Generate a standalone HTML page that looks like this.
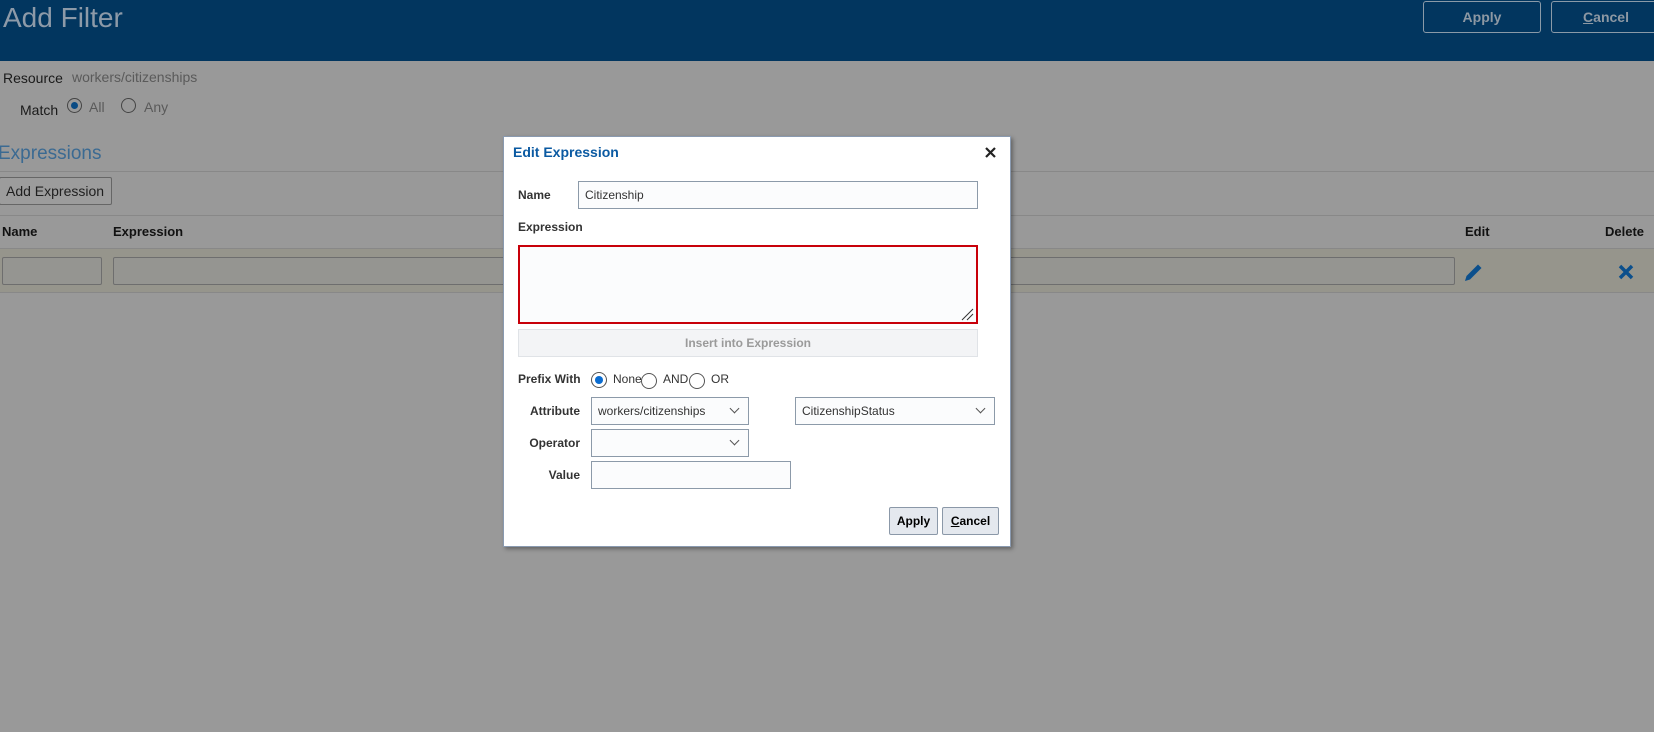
<!DOCTYPE html>
<html><head><style>
*{box-sizing:border-box;margin:0;padding:0}
body{width:1654px;height:732px;background:#999;font-family:"Liberation Sans",sans-serif;position:relative;overflow:hidden}
.a{position:absolute;white-space:nowrap}
.hdr{left:0;top:0;width:1654px;height:61px;background:#02365f}
.t{color:#5a5a5a;font-size:14px}
.inp{border:1px solid #6e6e6e;border-radius:2px;background:#959591}
.d{left:503px;top:136px;width:508px;height:411px;background:#fff;border:1px solid #8a9ab0;box-shadow:2px 2px 4px rgba(0,0,0,.35)}
.l{font-size:12px;color:#333;font-weight:bold}
.fi{border:1px solid #8c9aa9;background:#fbfcfd;font-size:12px;color:#333;padding-left:6px;display:flex;align-items:center}
.rad{width:16px;height:16px;border:1px solid #555;border-radius:50%;background:#fff}
.chev{position:absolute;right:10px;top:7px;width:7px;height:7px;border-right:1px solid #555;border-bottom:1px solid #555;transform:rotate(45deg)}
.btn{border:1px solid #8b98a8;background:#e4e8ee;font-size:12px;font-weight:bold;color:#000;display:flex;align-items:center;justify-content:center;border-radius:2px}
</style></head><body>
<div class="a hdr"></div>
<div class="a" style="left:3px;top:2px;font-size:28px;color:#8d9aa8">Add Filter</div>
<div class="a" style="left:1423px;top:1px;width:118px;height:32px;border:1px solid #8a9aa8;border-radius:3px;color:#8d98a3;font-weight:bold;font-size:14px;display:flex;align-items:center;justify-content:center">Apply</div>
<div class="a" style="left:1551px;top:1px;width:110px;height:32px;border:1px solid #8a9aa8;border-radius:3px;color:#8d98a3;font-weight:bold;font-size:14px;display:flex;align-items:center;justify-content:center"><u>C</u>ancel</div>
<div class="a" style="left:3px;top:70px;font-size:14px;color:#1a1a1a">Resource</div>
<div class="a t" style="left:72px;top:69px">workers/citizenships</div>
<div class="a" style="left:20px;top:102px;font-size:14px;color:#1a1a1a">Match</div>
<div class="a" style="left:67px;top:98px;width:15px;height:15px;border:1px solid #444;border-radius:50%;background:#9a9a9a"><div style="margin:3px;width:7px;height:7px;border-radius:50%;background:#0a4b84"></div></div>
<div class="a t" style="left:89px;top:99px">All</div>
<div class="a" style="left:121px;top:98px;width:15px;height:15px;border:1px solid #444;border-radius:50%"></div>
<div class="a t" style="left:144px;top:99px">Any</div>
<div class="a" style="left:-2px;top:143px;font-size:19px;color:#3b6a92">Expressions</div>
<div class="a" style="left:0;top:171px;width:1654px;height:1px;background:#888"></div>
<div class="a" style="left:-1px;top:177px;width:113px;height:28px;border:1px solid #666;border-radius:2px;background:#9c9c9c;font-size:14px;color:#1f1f1f;padding:5px 0 0 6px">Add Expression</div>
<div class="a" style="left:0;top:215px;width:1654px;height:1px;background:#888"></div>
<div class="a" style="left:2px;top:224px;font-size:13px;font-weight:bold;color:#111">Name</div>
<div class="a" style="left:113px;top:224px;font-size:13px;font-weight:bold;color:#111">Expression</div>
<div class="a" style="left:1465px;top:224px;font-size:13px;font-weight:bold;color:#111">Edit</div>
<div class="a" style="left:1605px;top:224px;font-size:13px;font-weight:bold;color:#111">Delete</div>
<div class="a" style="left:0;top:248px;width:1654px;height:45px;background:#96958c;border-top:1px solid #888;border-bottom:1px solid #888"></div>
<div class="a inp" style="left:2px;top:257px;width:100px;height:28px"></div>
<div class="a inp" style="left:113px;top:257px;width:1342px;height:28px"></div>
<svg class="a" style="left:1464px;top:262px" width="20" height="20" viewBox="0 0 20 20"><path d="M1 19 L2.5 14 L14 2.5 L17.5 6 L6 17.5 Z" fill="#0b4f8c"/></svg>
<svg class="a" style="left:1618px;top:264px" width="16" height="16" viewBox="0 0 16 16"><path d="M2 2 L14 14 M14 2 L2 14" stroke="#0b4f8c" stroke-width="3.5"/></svg>

<div class="a d"></div>
<div class="a" style="left:513px;top:144px;font-size:14px;font-weight:bold;color:#0b5aa2">Edit Expression</div>
<svg class="a" style="left:985px;top:147px" width="11" height="11" viewBox="0 0 11 11"><path d="M1 1L10 10M10 1L1 10" stroke="#222" stroke-width="2.2"/></svg>
<div class="a l" style="left:518px;top:188px">Name</div>
<div class="a fi" style="left:578px;top:181px;width:400px;height:28px">Citizenship</div>
<div class="a l" style="left:518px;top:220px">Expression</div>
<div class="a" style="left:518px;top:245px;width:460px;height:79px;border:2px solid #c8000a;background:#fbfcfd"></div>
<svg class="a" style="left:961px;top:308px" width="13" height="13" viewBox="0 0 13 13"><path d="M1 12L12 1M6 12L12 6" stroke="#333" stroke-width="1"/></svg>
<div class="a" style="left:518px;top:329px;width:460px;height:28px;background:#f3f4f6;border:1px solid #e0e3e7;font-size:12px;font-weight:bold;color:#9a9a9a;display:flex;align-items:center;justify-content:center">Insert into Expression</div>
<div class="a l" style="left:518px;top:372px">Prefix With</div>
<div class="a rad" style="left:591px;top:372px"><div style="margin:3px;width:8px;height:8px;border-radius:50%;background:#0b6cd0"></div></div>
<div class="a" style="left:613px;top:372px;font-size:12px;color:#333">None</div>
<div class="a rad" style="left:641px;top:373px"></div>
<div class="a" style="left:663px;top:372px;font-size:12px;color:#333">AND</div>
<div class="a rad" style="left:689px;top:373px"></div>
<div class="a" style="left:711px;top:372px;font-size:12px;color:#333">OR</div>
<div class="a l" style="left:500px;top:404px;width:80px;text-align:right">Attribute</div>
<div class="a fi" style="left:591px;top:397px;width:158px;height:28px">workers/citizenships<div class="chev"></div></div>
<div class="a fi" style="left:795px;top:397px;width:200px;height:28px">CitizenshipStatus<div class="chev"></div></div>
<div class="a l" style="left:500px;top:436px;width:80px;text-align:right">Operator</div>
<div class="a fi" style="left:591px;top:429px;width:158px;height:28px"><div class="chev"></div></div>
<div class="a l" style="left:500px;top:468px;width:80px;text-align:right">Value</div>
<div class="a fi" style="left:591px;top:461px;width:200px;height:28px"></div>
<div class="a btn" style="left:889px;top:507px;width:49px;height:28px">Apply</div>
<div class="a btn" style="left:942px;top:507px;width:57px;height:28px"><u>C</u>ancel</div>
</body></html>
